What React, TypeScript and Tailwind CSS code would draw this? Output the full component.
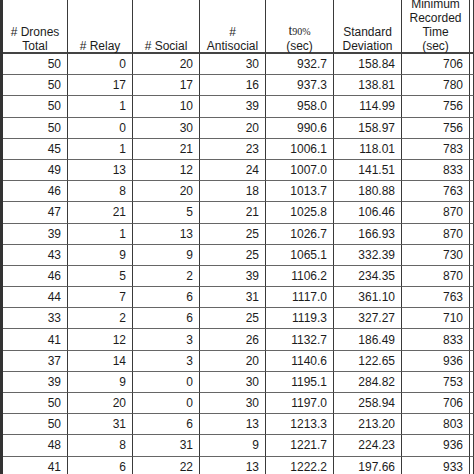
const rows: (string | number)[][] = [
  [50, 0, 20, 30, '932.7', '158.84', 706],
  [50, 17, 17, 16, '937.3', '138.81', 780],
  [50, 1, 10, 39, '958.0', '114.99', 756],
  [50, 0, 30, 20, '990.6', '158.97', 756],
  [45, 1, 21, 23, '1006.1', '118.01', 783],
  [49, 13, 12, 24, '1007.0', '141.51', 833],
  [46, 8, 20, 18, '1013.7', '180.88', 763],
  [47, 21, 5, 21, '1025.8', '106.46', 870],
  [39, 1, 13, 25, '1026.7', '166.93', 870],
  [43, 9, 9, 25, '1065.1', '332.39', 730],
  [46, 5, 2, 39, '1106.2', '234.35', 870],
  [44, 7, 6, 31, '1117.0', '361.10', 763],
  [33, 2, 6, 25, '1119.3', '327.27', 710],
  [41, 12, 3, 26, '1132.7', '186.49', 833],
  [37, 14, 3, 20, '1140.6', '122.65', 936],
  [39, 9, 0, 30, '1195.1', '284.82', 753],
  [50, 20, 0, 30, '1197.0', '258.94', 706],
  [50, 31, 6, 13, '1213.3', '213.20', 803],
  [48, 8, 31, 9, '1221.7', '224.23', 936],
  [41, 6, 22, 13, '1222.2', '197.66', 933],
]

const grid = 'grid grid-cols-[65px_65px_67px_66px_68px_68px_68px_1fr]'

function Head({ children }: { children: React.ReactNode }) {
  return (
    <div className="h-[54px] border-r border-b-2 border-r-[#3a3a3a] border-b-[#444] flex items-end justify-center text-center leading-[14px] pb-0">
      <div className="relative top-[1px]">{children}</div>
    </div>
  )
}

export default function App() {
  return (
    <div className="w-[474px] h-[474px] overflow-hidden bg-white text-[#1c1c1c] text-[12px] font-['Liberation_Sans',Arial,sans-serif]">
      <div className="border-l-[3px] border-[#333]">
        <div className={grid}>
          <Head>
            # Drones
            <br />
            Total
          </Head>
          <Head># Relay</Head>
          <Head># Social</Head>
          <Head>
            #
            <br />
            Antisocial
          </Head>
          <Head>
            <span className="font-['Liberation_Serif',serif]">
              <span className="text-[14px]">t</span>
              <span className="text-[10px]">90%</span>
            </span>
            <br />
            (sec)
          </Head>
          <Head>
            Standard
            <br />
            Deviation
          </Head>
          <Head>
            Minimum
            <br />
            Recorded
            <br />
            Time
            <br />
            (sec)
          </Head>
          <Head>{''}</Head>
        </div>
        {rows.map((r, i) => (
          <div key={i} className={grid}>
            {r.map((v, j) => (
              <div
                key={j}
                className="h-[21.2px] border-r border-b border-r-[#3a3a3a] border-b-[#666] flex items-center justify-end pr-[6px] leading-none"
              >
                {v}
              </div>
            ))}
            <div className="h-[21.2px] border-r border-b border-r-[#3a3a3a] border-b-[#666]" />
          </div>
        ))}
      </div>
    </div>
  )
}
